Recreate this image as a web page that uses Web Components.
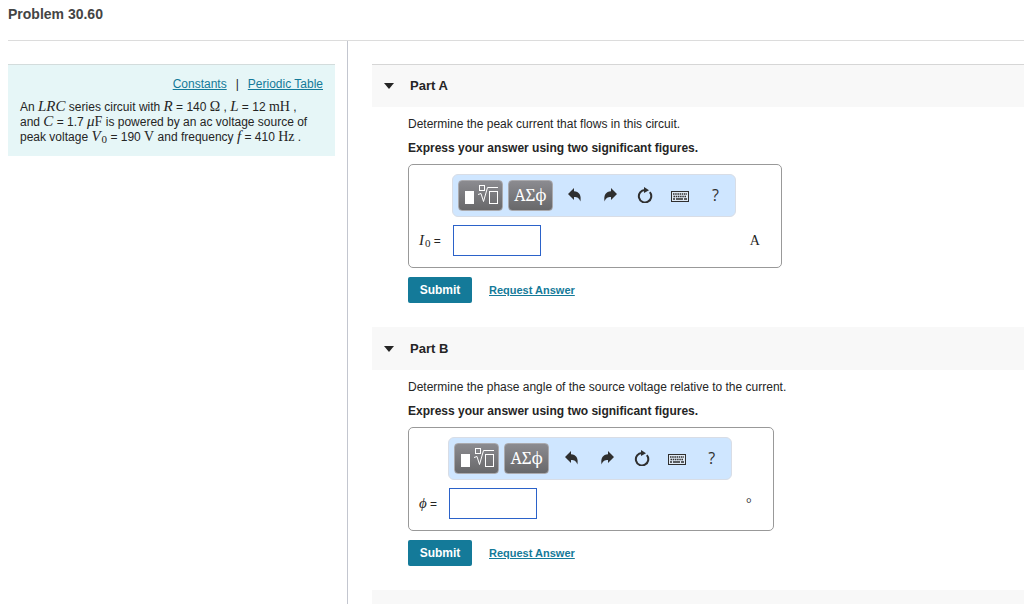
<!DOCTYPE html>
<html lang="en">
<head>
<meta charset="utf-8">
<meta name="viewport" content="width=device-width, initial-scale=1">
<title>Problem 30.60</title>
<style>
  body {
    margin: 0;
    font-family: "Liberation Sans", Arial, sans-serif;
    font-size: 12px;
    line-height: 18px;
    color: #252525;
    background: #ffffff;
  }
</style>
</head>
<body>
<problem-page heading="Problem 30.60">
  <problem-statement slot="statement">
    An <math-text italic>LRC</math-text> series circuit with
    <math-text italic>R</math-text> = 140 <math-text>Ω</math-text> ,
    <math-text italic>L</math-text> = 12 <math-text>mH</math-text> ,
    and <math-text italic>C</math-text> = 1.7
    <math-text italic>μ</math-text><math-text>F</math-text> is powered by an ac voltage source of
    peak voltage <math-text italic sub="0">V</math-text> = 190 <math-text>V</math-text>
    and frequency <math-text italic>f</math-text> = 410 <math-text>Hz</math-text> .
  </problem-statement>

  <problem-part heading="Part A" class="first">
    Determine the peak current that flows in this circuit.
    <span slot="instruction">Express your answer using two significant figures.</span>
    <answer-box slot="answer">
      <span slot="label"><math-text italic sub="0">I</math-text> =</span>
      <math-text slot="unit">A</math-text>
    </answer-box>
  </problem-part>

  <problem-part heading="Part B">
    Determine the phase angle of the source voltage relative to the current.
    <span slot="instruction">Express your answer using two significant figures.</span>
    <answer-box slot="answer">
      <span slot="label"><math-text italic>ϕ</math-text> =</span>
      <math-text slot="unit">°</math-text>
    </answer-box>
  </problem-part>
</problem-page>

<script>
// clones the markup into an open shadow root
function attach(host, html) {
  const template = document.createElement("template");
  template.innerHTML = html;
  const root = host.attachShadow({ mode: "open" });
  root.appendChild(template.content.cloneNode(true));
  return root;
}

// a variable or unit, set in serif; "sub" adds a subscript
class MathText extends HTMLElement {
  constructor() {
    super();
    this._shadowRoot = attach(this, `<style>
        :host {
          display: inline-block;
          font-family: "Liberation Serif", "Times New Roman", serif;
          font-size: 14px;
          line-height: 13px;
        }
        :host([italic]) { font-size: 15px; font-style: italic; }
        sub {
          margin-left: 1px;
          font-size: 11px;
          font-style: normal;
          line-height: 9px;
          vertical-align: -2px;
        }
        sub:empty { display: none; }
      </style><slot></slot><sub></sub>`);
  }

  connectedCallback() {
    this._shadowRoot.querySelector("sub").textContent = this.getAttribute("sub") || "";
  }
}

class ProblemStatement extends HTMLElement {
  constructor() {
    super();
    attach(this, `
      <style>
        :host {
          display: block;
          padding: 12px 12px 11px;
          border-top: 1px solid #d3dcdc;
          background: #e6f6f7;
        }
        nav {
          display: flex;
          justify-content: flex-end;
          gap: 9px;
          line-height: 15px;
          margin-bottom: 8px;
        }
        a { color: #147a99; }
        p { margin: 0; padding-right: 8px; line-height: 15px; }
      </style>
      <nav>
        <a href="#constants">Constants</a>
        <span>|</span>
        <a href="#periodic">Periodic Table</a>
      </nav>
      <p><slot></slot></p>
    `);
  }
}

const icons = {
  undo: `<path d="M0 6L6 0v3.200c5 .2 7.600 4 6.400 10.300C11.400 10 9.500 9 6 8.900V12z" fill="#2f2f2f"/>`,
  redo: `<path d="M14 6L8 0v3.200C3 3.400.4 7.200 1.600 13.500 2.600 10 4.500 9 8 8.900V12z" fill="#2f2f2f"/>`,
  reset: `<path d="M8 3A6.200 6.200 0 1 0 12.800 5.200" fill="none" stroke="#2f2f2f" stroke-width="2"/><path d="M7 0l5 3.200L7 6z" fill="#2f2f2f"/>`,
};

// the blue strip of math entry tools
class MathToolbar extends HTMLElement {
  constructor() {
    super();
    attach(this, `
      <style>
        :host {
          display: flex;
          box-sizing: border-box;
          height: 43px;
          padding: 5px 2px 5px 5px;
          border: 1px solid #d8dde6;
          border-radius: 6px;
          background: #cfe6ff;
        }
        button {
          display: flex;
          align-items: center;
          justify-content: center;
          box-sizing: border-box;
          width: 35px;
          height: 31px;
          padding: 0 0 2px;
          border: 0;
          background: none;
          color: #2f2f2f;
          font: 16px "Open Sans", sans-serif;
          cursor: pointer;
        }
        .dark {
          width: 45px;
          margin-right: 5px;
          border: 1px solid #aaaaae;
          border-radius: 4px;
          background: linear-gradient(#8b8b90, #68686a);
          color: #ffffff;
          font: 16px "Noto Serif", "Liberation Serif", serif;
        }
        .keyboard { padding: 2px 0 0; }
        svg { display: block; }
      </style>
      <button class="dark" aria-label="Templates">
        <svg width="35" height="21" viewBox="0 0 35 21" fill="none" stroke="#ffffff">
          <rect x="2" y="7" width="9" height="13" fill="#ffffff" stroke="none"/>
          <rect x="16.500" y="1.500" width="5" height="5"/>
          <path d="M15 10.500l3-1 2.500 8 4-14H35"/>
          <rect x="26.500" y="7.500" width="8" height="12"/>
        </svg>
      </button>
      <button class="dark" aria-label="Symbols">ΑΣϕ</button>
      <button aria-label="Undo"><svg width="14" height="14" viewBox="0 0 14 14">${icons.undo}</svg></button>
      <button aria-label="Redo"><svg width="14" height="14" viewBox="0 0 14 14">${icons.redo}</svg></button>
      <button aria-label="Reset"><svg width="16" height="16" viewBox="0 0 16 16">${icons.reset}</svg></button>
      <button class="keyboard" aria-label="Keyboard shortcuts">
        <svg width="18" height="11" viewBox="0 0 18 11" fill="none" stroke="#2f2f2f">
          <rect x="0.500" y="0.500" width="17" height="10" fill="#dfe9f4"/>
          <path d="M2 3h14M2.500 5.500h13" stroke-width="1.500" stroke-dasharray="1.500 .7"/>
          <path d="M2 8h2m1 0h7m1 0h3" stroke-width="1.500"/>
        </svg>
      </button>
      <button aria-label="Help">?</button>
    `);
  }
}

class AnswerBox extends HTMLElement {
  constructor() {
    super();
    attach(this, `
      <style>
        :host {
          display: inline-grid;
          grid-template-columns: auto auto auto;
          align-items: center;
          row-gap: 8px;
          box-sizing: border-box;
          padding: 9px 21px 11px 10px;
          border: 1px solid #999999;
          border-radius: 5px;
        }
        math-toolbar { grid-column: 2; }
        label { grid-column: 1; padding-right: 11px; }
        input {
          box-sizing: border-box;
          width: 88px;
          height: 31px;
          margin-left: 1px;
          padding: 0 6px;
          border: 1px solid #2b62c9;
          background: #ffffff;
          font: inherit;
          outline: none;
        }
        .unit { padding-left: 14px; }
      </style>
      <math-toolbar></math-toolbar>
      <label for="answer"><slot name="label"></slot></label>
      <input id="answer" type="text">
      <span class="unit"><slot name="unit"></slot></span>
    `);
  }
}

class ProblemPart extends HTMLElement {
  constructor() {
    super();
    this._shadowRoot = attach(this, `
      <style>
        :host { display: block; }
        header {
          display: flex;
          align-items: center;
          box-sizing: border-box;
          height: 43px;
          padding-left: 12px;
          border-top: 1px solid #f8f8f8;
          background: #f8f8f8;
        }
        :host(.first) header { border-top-color: #d6d6d6; }
        button {
          display: flex;
          width: 10px;
          padding: 0;
          border: 0;
          background: none;
          cursor: pointer;
        }
        h2 { margin: 0 0 0 16px; font-size: 13px; }
        .body { padding: 8px 36px 24px; }
        p { margin: 0 0 6px; }
        .instruction { margin-bottom: 7px; font-weight: bold; }
        .answer { display: flex; margin-bottom: 9px; }
        .actions { display: flex; align-items: center; gap: 17px; }
        .submit {
          justify-content: center;
          width: 64px;
          height: 26px;
          align-items: center;
          border-radius: 2px;
          background: #147a99;
          color: #ffffff;
          font: bold 12px "Liberation Sans", Arial, sans-serif;
        }
        a { color: #147a99; font-size: 11px; font-weight: bold; }
      </style>
      <header>
        <button aria-label="Collapse">
          <svg width="10" height="6" viewBox="0 0 10 6"><path d="M0 0h10L5 6z" fill="#252525"/></svg>
        </button>
        <h2></h2>
      </header>
      <div class="body">
        <p><slot></slot></p>
        <p class="instruction"><slot name="instruction"></slot></p>
        <div class="answer"><slot name="answer"></slot></div>
        <div class="actions">
          <button class="submit">Submit</button>
          <a href="#request">Request Answer</a>
        </div>
      </div>
    `);
  }

  connectedCallback() {
    this._shadowRoot.querySelector("h2").textContent = this.getAttribute("heading");
  }
}

class ProblemPage extends HTMLElement {
  constructor() {
    super();
    this._shadowRoot = attach(this, `
      <style>
        :host {
          display: flex;
          flex-direction: column;
          min-height: 100vh;
          padding-left: 8px;
        }
        h1 {
          margin: 0;
          padding: 5px 0 17px;
          border-bottom: 1px solid #dcdcdc;
          font-size: 14px;
          line-height: 18px;
          color: #444444;
        }
        .columns { display: flex; flex: 1; }
        aside {
          flex: 0 0 340px;
          box-sizing: border-box;
          padding: 23px 12px 0 0;
          border-right: 1px solid #c3c6cf;
        }
        main {
          display: flex;
          flex-direction: column;
          flex: 1;
          min-width: 0;
          padding: 23px 0 0 24px;
        }
        .next { flex: 1; background: #f8f8f8; }
      </style>
      <h1></h1>
      <div class="columns">
        <aside><slot name="statement"></slot></aside>
        <main>
          <slot></slot>
          <div class="next"></div>
        </main>
      </div>
    `);
  }

  connectedCallback() {
    this._shadowRoot.querySelector("h1").textContent = this.getAttribute("heading");
  }
}

customElements.define("math-text", MathText);
customElements.define("problem-statement", ProblemStatement);
customElements.define("math-toolbar", MathToolbar);
customElements.define("answer-box", AnswerBox);
customElements.define("problem-part", ProblemPart);
customElements.define("problem-page", ProblemPage);
</script>
</body>
</html>
